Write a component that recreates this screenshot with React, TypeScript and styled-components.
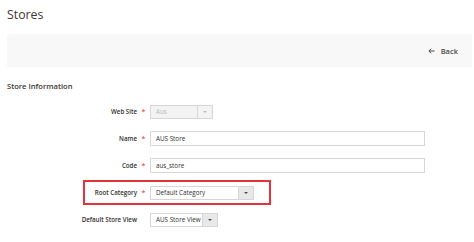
import React from "react";
import styled, { createGlobalStyle } from "styled-components";

const Global = createGlobalStyle`
  html, body { margin: 0; padding: 0; background: #fff; }
  body { font-family: "Open Sans", "Noto Sans", sans-serif; color: #303030; }
`;

const Page = styled.div`
  width: 474px;
  height: 242px;
  overflow: hidden;
  padding: 0 0 0 7px;
  box-sizing: border-box;
`;

const Title = styled.h1`
  margin: 0;
  padding-top: 5px;
  height: 29px;
  font-size: 12.3px;
  font-weight: 400;
  line-height: 19px;
  color: #41362f;
`;

const Toolbar = styled.div`
  height: 33px;
  background: #f8f8f8;
  display: flex;
  align-items: center;
  justify-content: flex-end;
  padding-right: 14px;
  margin-right: 2px;
`;

const BackButton = styled.div`
  display: flex;
  align-items: center;
  gap: 6px;
  font-size: 7.5px;
  font-weight: 600;
  color: #514943;
`;

const Section = styled.h2`
  margin: 13px 0 0;
  font-size: 7.6px;
  font-weight: 600;
  line-height: 12px;
  color: #41362f;
`;

const Form = styled.div`
  margin-top: 12.5px;
  display: flex;
  flex-direction: column;
  gap: 13px;
`;

const Row = styled.div`
  position: relative;
  display: flex;
  align-items: center;
  height: 14px;
`;

const Label = styled.div`
  width: 130px;
  flex-shrink: 0;
  text-align: right;
  font-size: 6.2px;
  font-weight: 600;
  color: #303030;
`;

const Required = styled.div<{ $show: boolean }>`
  width: 13px;
  flex-shrink: 0;
  text-align: center;
  font-size: 7px;
  color: #e22626;
  visibility: ${(p) => (p.$show ? "visible" : "hidden")};
`;

const Input = styled.div<{ $width: number }>`
  width: ${(p) => p.$width}px;
  flex-shrink: 0;
  height: 15px;
  box-sizing: border-box;
  border: 1px solid #d6d6d6;
  background: #fff;
  font-size: 6.3px;
  line-height: 13px;
  padding: 0 5px;
  color: #303030;
`;

const Select = styled.div<{ $width: number; $disabled?: boolean }>`
  width: ${(p) => p.$width}px;
  flex-shrink: 0;
  height: 14px;
  box-sizing: border-box;
  border: 1px solid #d6d6d6;
  display: flex;
  background: ${(p) => (p.$disabled ? "#f3f3f3" : "#fff")};
  font-size: 6.3px;
  color: ${(p) => (p.$disabled ? "#b8b8b8" : "#303030")};
`;

const SelectText = styled.div`
  flex: 1;
  padding: 0 4px 0 5px;
  line-height: 12px;
  white-space: nowrap;
  overflow: hidden;
`;

const SelectButton = styled.div<{ $disabled?: boolean }>`
  width: 14px;
  flex-shrink: 0;
  border-left: 1px solid #d6d6d6;
  background: ${(p) => (p.$disabled ? "#f3f3f3" : "#e8e8e8")};
  display: flex;
  align-items: center;
  justify-content: center;
  &::after {
    content: "";
    border-left: 2px solid transparent;
    border-right: 2px solid transparent;
    border-top: 2px solid ${(p) => (p.$disabled ? "#bbb" : "#514943")};
  }
`;

const Highlight = styled.div`
  position: absolute;
  left: 76px;
  top: -6px;
  width: 188px;
  height: 25px;
  box-sizing: border-box;
  border: 2px solid #e0333a;
  pointer-events: none;
`;

function Arrow() {
  return (
    <svg width="7" height="6" viewBox="0 0 7 6">
      <path d="M6.5 3H1M3.2 0.7L0.9 3l2.3 2.3" fill="none" stroke="#514943" strokeWidth="1" />
    </svg>
  );
}

export default function App() {
  return (
    <Page>
      <Global />
      <Title>Stores</Title>
      <Toolbar>
        <BackButton>
          <Arrow />
          <span>Back</span>
        </BackButton>
      </Toolbar>
      <Section>Store Information</Section>
      <Form>
        <Row>
          <Label>Web Site</Label>
          <Required $show>*</Required>
          <Select $width={63} $disabled>
            <SelectText>Aus</SelectText>
            <SelectButton $disabled />
          </Select>
        </Row>
        <Row>
          <Label>Name</Label>
          <Required $show>*</Required>
          <Input $width={275}>AUS Store</Input>
        </Row>
        <Row>
          <Label>Code</Label>
          <Required $show>*</Required>
          <Input $width={275}>aus_store</Input>
        </Row>
        <Row>
          <Label>Root Category</Label>
          <Required $show>*</Required>
          <Select $width={104}>
            <SelectText>Default Category</SelectText>
            <SelectButton />
          </Select>
          <Highlight />
        </Row>
        <Row>
          <Label>Default Store View</Label>
          <Required $show={false}>*</Required>
          <Select $width={68}>
            <SelectText>AUS Store View</SelectText>
            <SelectButton />
          </Select>
        </Row>
      </Form>
    </Page>
  );
}
